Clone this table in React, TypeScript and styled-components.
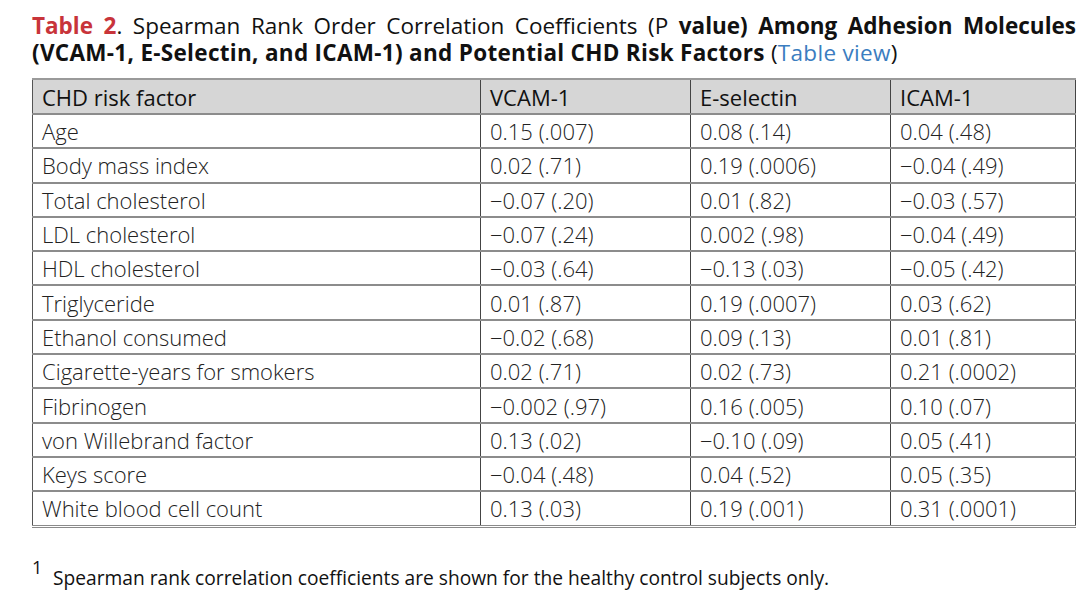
import React from 'react';
import styled, { createGlobalStyle } from 'styled-components';

const GlobalStyle = createGlobalStyle`
  html, body {
    margin: 0;
    padding: 0;
    background: #ffffff;
  }
  body {
    font-family: "Open Sans", "Noto Sans", sans-serif;
    color: #111;
  }
`;

const Page = styled.div`
  width: 1044px;
  padding: 12px 0 0 32px;
`;

const Caption = styled.div`
  font-size: 22.5px;
  line-height: 27px;
  color: #111;
  margin-bottom: 12px;
`;

const CaptionLine = styled.div<{ $justify?: boolean }>`
  white-space: nowrap;
  text-align: ${(p) => (p.$justify ? 'justify' : 'left')};
  text-align-last: ${(p) => (p.$justify ? 'justify' : 'left')};
  letter-spacing: ${(p) => (p.$justify ? '0' : '0.3px')};
`;

const Label = styled.span`
  color: #c8343a;
  font-weight: 700;
`;

const Bold = styled.span`
  font-weight: 700;
`;

const Link = styled.span`
  color: #3b7dc0;
`;

const Table = styled.table`
  width: 100%;
  border-collapse: collapse;
  table-layout: fixed;
  border-top: 2px solid #9a9a9a;
  border-bottom: 3px double #8a8a8a;
  border-left: 1px solid #555;
  border-right: 1px solid #555;
`;

const HeadCell = styled.th`
  background: #d6d6d6;
  font-weight: 400;
  text-align: left;
  font-size: 22px;
  height: 33px;
  padding: 0 0 0 9px;
  border-right: 1px solid #444;
  border-bottom: 2px solid #8c8c8c;
  color: #111;
`;

const Cell = styled.td`
  font-weight: 300;
  font-size: 22px;
  height: 32.3px;
  padding: 0 0 0 9px;
  border-right: 1px solid #444;
  border-bottom: 2px solid #8c8c8c;
  color: #222;
  white-space: nowrap;
`;

const Footnote = styled.div`
  margin-top: 36px;
  display: flex;
  align-items: flex-start;
  font-size: 19.2px;
  color: #111;
`;

const Sup = styled.span`
  font-size: 18px;
  width: 21px;
  margin-top: -9px;
`;

const rows: [string, string, string, string][] = [
  ['Age', '0.15 (.007)', '0.08 (.14)', '0.04 (.48)'],
  ['Body mass index', '0.02 (.71)', '0.19 (.0006)', '−0.04 (.49)'],
  ['Total cholesterol', '−0.07 (.20)', '0.01 (.82)', '−0.03 (.57)'],
  ['LDL cholesterol', '−0.07 (.24)', '0.002 (.98)', '−0.04 (.49)'],
  ['HDL cholesterol', '−0.03 (.64)', '−0.13 (.03)', '−0.05 (.42)'],
  ['Triglyceride', '0.01 (.87)', '0.19 (.0007)', '0.03 (.62)'],
  ['Ethanol consumed', '−0.02 (.68)', '0.09 (.13)', '0.01 (.81)'],
  ['Cigarette-years for smokers', '0.02 (.71)', '0.02 (.73)', '0.21 (.0002)'],
  ['Fibrinogen', '−0.002 (.97)', '0.16 (.005)', '0.10 (.07)'],
  ['von Willebrand factor', '0.13 (.02)', '−0.10 (.09)', '0.05 (.41)'],
  ['Keys score', '−0.04 (.48)', '0.04 (.52)', '0.05 (.35)'],
  ['White blood cell count', '0.13 (.03)', '0.19 (.001)', '0.31 (.0001)'],
];

export default function App() {
  return (
    <>
      <GlobalStyle />
      <Page>
        <Caption>
          <CaptionLine $justify>
            <Label>Table 2</Label>. Spearman Rank Order Correlation Coefficients (P{' '}
            <Bold>value) Among Adhesion Molecules</Bold>
          </CaptionLine>
          <CaptionLine>
            <Bold>(VCAM-1, E-Selectin, and ICAM-1) and Potential CHD Risk Factors</Bold>{' '}
            (<Link>Table view</Link>)
          </CaptionLine>
        </Caption>
        <Table>
          <colgroup>
            <col style={{ width: 448 }} />
            <col style={{ width: 210 }} />
            <col style={{ width: 200 }} />
            <col />
          </colgroup>
          <thead>
            <tr>
              <HeadCell>CHD risk factor</HeadCell>
              <HeadCell>VCAM-1</HeadCell>
              <HeadCell>E-selectin</HeadCell>
              <HeadCell>ICAM-1</HeadCell>
            </tr>
          </thead>
          <tbody>
            {rows.map((r) => (
              <tr key={r[0]}>
                {r.map((c, i) => (
                  <Cell key={i}>{c}</Cell>
                ))}
              </tr>
            ))}
          </tbody>
        </Table>
        <Footnote>
          <Sup>1</Sup>
          <span>Spearman rank correlation coefficients are shown for the healthy control subjects only.</span>
        </Footnote>
      </Page>
    </>
  );
}
